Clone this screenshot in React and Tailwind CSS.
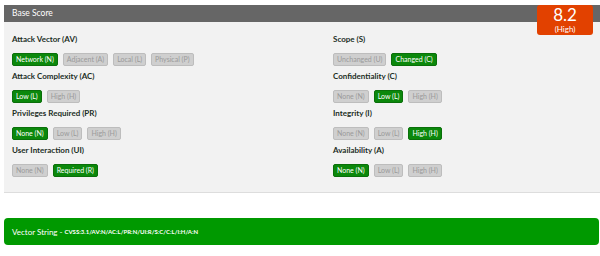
import React from "react";

const groupsLeft = [
  { label: "Attack Vector (AV)", opts: ["Network (N)", "Adjacent (A)", "Local (L)", "Physical (P)"], sel: 0 },
  { label: "Attack Complexity (AC)", opts: ["Low (L)", "High (H)"], sel: 0 },
  { label: "Privileges Required (PR)", opts: ["None (N)", "Low (L)", "High (H)"], sel: 0 },
  { label: "User Interaction (UI)", opts: ["None (N)", "Required (R)"], sel: 1 },
];
const groupsRight = [
  { label: "Scope (S)", opts: ["Unchanged (U)", "Changed (C)"], sel: 1 },
  { label: "Confidentiality (C)", opts: ["None (N)", "Low (L)", "High (H)"], sel: 1 },
  { label: "Integrity (I)", opts: ["None (N)", "Low (L)", "High (H)"], sel: 2 },
  { label: "Availability (A)", opts: ["None (N)", "Low (L)", "High (H)"], sel: 0 },
];

function Group({ g }) {
  return (
    <div className="flex flex-col">
      <div className="h-[14px] leading-[14px] text-[8px] font-bold text-[#1c2e1f]">{g.label}</div>
      <div className="mt-[7px] mb-[3px] flex gap-[5px]">
        {g.opts.map((o, i) =>
          i === g.sel ? (
            <span key={o} className="h-[13px] leading-[11px] px-[3px] rounded-[2px] border border-[#0a6f0a] bg-[#0b880b] text-white text-[7px]">
              {o}
            </span>
          ) : (
            <span key={o} className="h-[13px] leading-[11px] px-[3px] rounded-[2px] border border-[#bdbdbd] bg-[#cfcfcf] text-[#9a9a9a] text-[7px]">
              {o}
            </span>
          )
        )}
      </div>
    </div>
  );
}

export default function App() {
  return (
    <div className="relative w-[600px] h-[256px] bg-white overflow-hidden pt-[5px] pl-[4px]" style={{ fontFamily: "Lato, 'Open Sans', sans-serif" }}>
      <div className="bg-[#f2f2f2] border-b border-[#dddddd]">
        <div className="h-[17px] bg-[#666666] pl-[8px] text-white text-[8.5px] leading-[17px]">Base Score</div>
        <div className="grid grid-cols-[321px_1fr] pl-[8px] pt-[10px] pb-[12px]">
          <div className="flex flex-col">
            {groupsLeft.map((g) => (
              <Group key={g.label} g={g} />
            ))}
          </div>
          <div className="flex flex-col">
            {groupsRight.map((g) => (
              <Group key={g.label} g={g} />
            ))}
          </div>
        </div>
      </div>
      <div className="mt-[25px] mr-[1px] h-[27px] rounded-[4px] bg-[#009900] flex items-center pl-[8px] text-white">
        <span className="text-[8px]">Vector String -&nbsp;</span>
        <span className="text-[6px] font-bold">CVSS:3.1/AV:N/AC:L/PR:N/UI:R/S:C/C:L/I:H/A:N</span>
      </div>
      <div className="absolute top-[5px] right-[7px] w-[56px] h-[30px] rounded-[3px] bg-[#e24100] flex flex-col items-center justify-center text-white">
        <span className="text-[17px] leading-[18px]">8.2</span>
        <span className="text-[8px] leading-[10px]">(High)</span>
      </div>
    </div>
  );
}
